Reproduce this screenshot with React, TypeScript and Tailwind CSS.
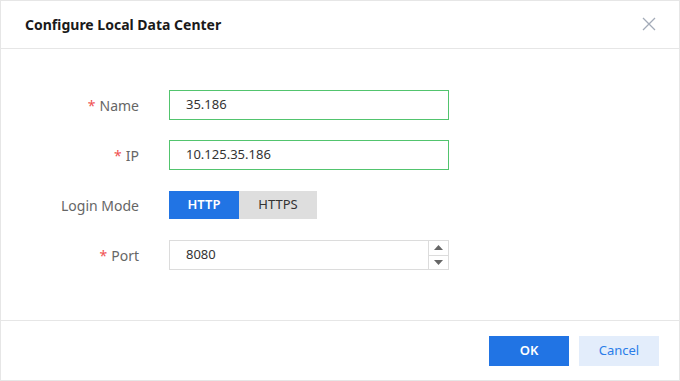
import React from "react";

const font = { fontFamily: '"Noto Sans", "Liberation Sans", Arial, sans-serif' };

function Label({ text, required }: { text: string; required?: boolean }) {
  return (
    <div className="w-[138px] shrink-0 text-right text-[14px] text-[#666]">
      {required && <span className="mr-[4px] text-[#f05252]">*</span>}
      {text}
    </div>
  );
}

export default function App() {
  return (
    <div
      className="w-[680px] h-[381px] bg-white border border-[#e6e6e6] flex flex-col"
      style={font}
    >
      <div className="h-[48px] shrink-0 border-b border-[#e6e6e6] flex items-center justify-between pl-[24px] pr-[23px]">
        <div className="text-[14px] font-bold text-[#1a1a1a]">Configure Local Data Center</div>
        <svg width="14" height="14" viewBox="0 0 14 14" className="mt-[-2px]">
          <path d="M1 1L13 13M13 1L1 13" stroke="#a3abb8" strokeWidth="1.3" />
        </svg>
      </div>
      <div className="flex-1 flex flex-col gap-[20px] pt-[41px]">
        <div className="flex items-center h-[30px] gap-[30px]">
          <Label text="Name" required />
          <div className="w-[280px] h-[30px] border border-[#52c46e] flex items-center pl-[16px] text-[13px] text-[#333]">
            35.186
          </div>
        </div>
        <div className="flex items-center h-[30px] gap-[30px]">
          <Label text="IP" required />
          <div className="w-[280px] h-[30px] border border-[#52c46e] flex items-center pl-[16px] text-[13px] text-[#333]">
            10.125.35.186
          </div>
        </div>
        <div className="flex items-center h-[30px] gap-[30px]">
          <Label text="Login Mode" />
          <div className="flex h-[28px]">
            <div className="w-[70px] bg-[#2174e4] text-white text-[13px] font-semibold flex items-center justify-center">
              HTTP
            </div>
            <div className="w-[78px] bg-[#dedede] text-[#333] text-[13px] flex items-center justify-center">
              HTTPS
            </div>
          </div>
        </div>
        <div className="flex items-center h-[30px] gap-[30px]">
          <Label text="Port" required />
          <div className="w-[280px] h-[30px] border border-[#dcdcdc] flex">
            <div className="flex-1 flex items-center pl-[16px] text-[13px] text-[#333]">8080</div>
            <div className="w-[20px] border-l border-[#dcdcdc] flex flex-col">
              <div className="flex-1 flex items-center justify-center border-b border-[#dcdcdc]">
                <svg width="9" height="5" viewBox="0 0 9 5">
                  <path d="M0 5L4.5 0L9 5Z" fill="#666" />
                </svg>
              </div>
              <div className="flex-1 flex items-center justify-center">
                <svg width="9" height="5" viewBox="0 0 9 5">
                  <path d="M0 0L4.5 5L9 0Z" fill="#666" />
                </svg>
              </div>
            </div>
          </div>
        </div>
      </div>
      <div className="h-[60px] shrink-0 border-t border-[#e6e6e6] flex items-center justify-end gap-[10px] pr-[20px]">
        <div className="w-[80px] h-[30px] bg-[#2174e4] text-white text-[13px] font-semibold flex items-center justify-center">
          OK
        </div>
        <div className="w-[80px] h-[30px] bg-[#e3edfb] text-[#2b7de9] text-[13px] flex items-center justify-center">
          Cancel
        </div>
      </div>
    </div>
  );
}
